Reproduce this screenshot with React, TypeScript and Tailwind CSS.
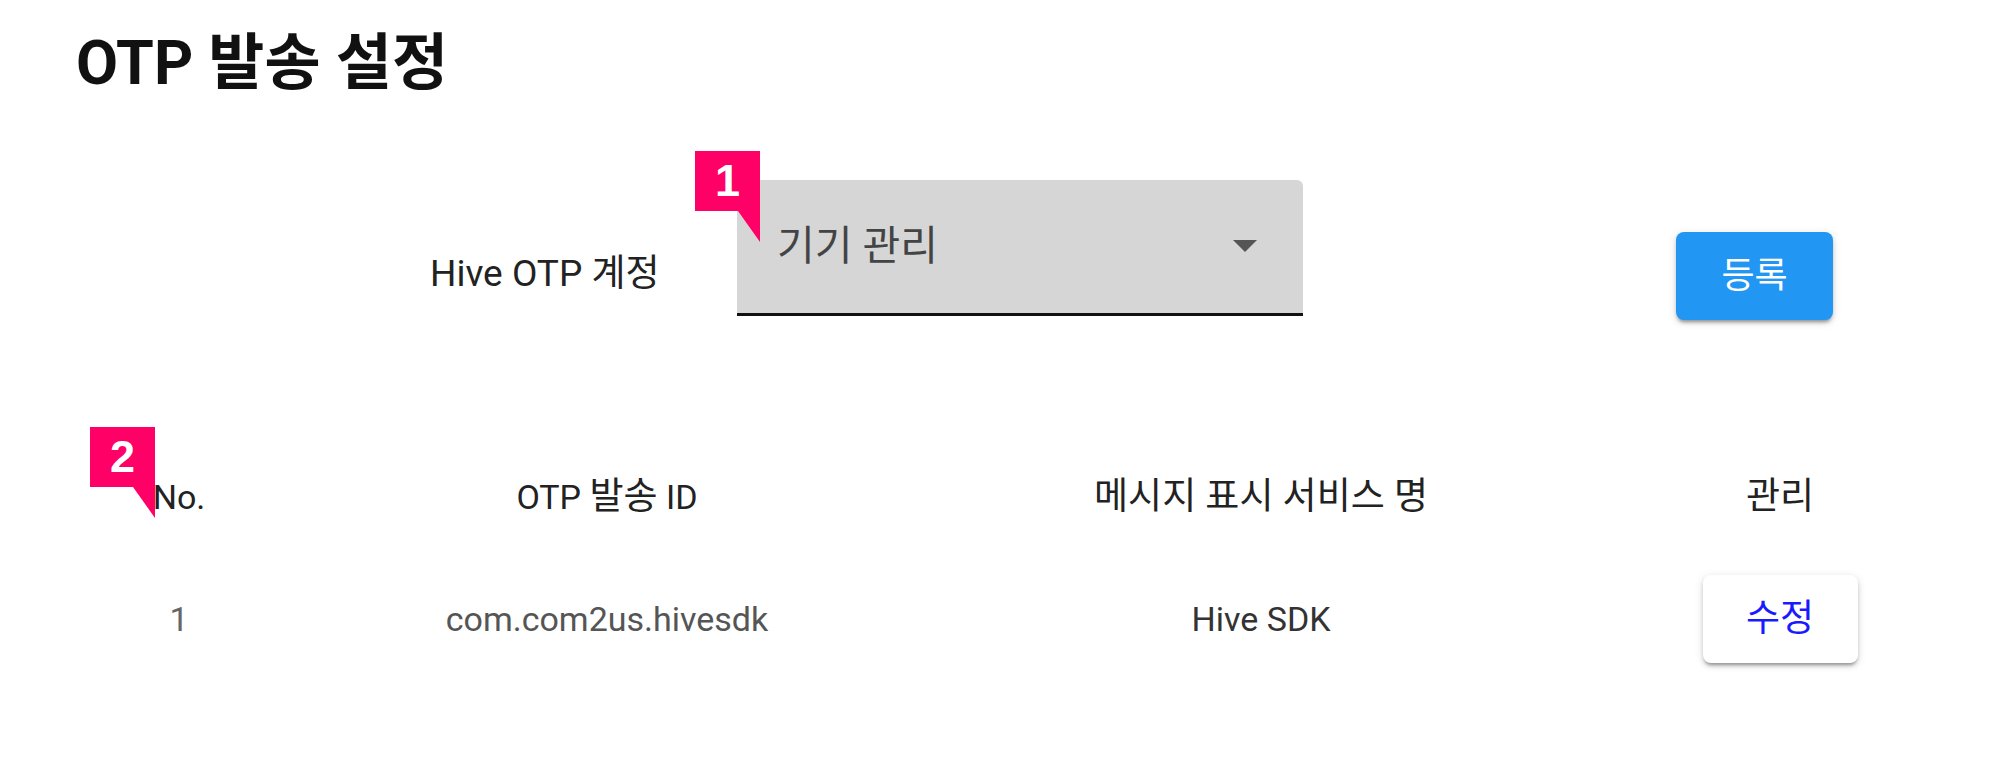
import React from "react";

const font = { fontFamily: '"Roboto", "Noto Sans CJK KR", sans-serif' };

const raised =
  "shadow-[0_4px_3px_-2px_rgba(0,0,0,0.25),0_3px_4px_0_rgba(0,0,0,0.14),0_2px_10px_0_rgba(0,0,0,0.12)]";

function Marker({ n, className }: { n: string; className: string }) {
  return (
    <div className={`absolute ${className}`}>
      <div
        className="w-[65px] h-[60px] bg-[#ff0066] text-white font-bold text-[45px] leading-[60px] text-center"
        style={{ fontFamily: '"Liberation Sans", Arial, sans-serif' }}
      >
        {n}
      </div>
      <svg width="65" height="32" className="block" viewBox="0 0 65 32">
        <polygon points="43,0 65,0 65,31" fill="#ff0066" />
      </svg>
    </div>
  );
}

export default function App() {
  const rows = [{ no: "1", id: "com.com2us.hivesdk", name: "Hive SDK" }];

  return (
    <div className="relative w-[2000px] h-[758px] bg-white overflow-hidden" style={font}>
      <div className="pt-[33px] pl-[76px]">
        <h1 className="text-[61px] leading-none font-bold text-[#111]">OTP 발송 설정</h1>
      </div>

      {/* account row */}
      <div className="flex items-start mt-[86px] pl-[430px]">
        <div className="w-[307px] mt-[72px] text-[37px] leading-[44px] text-[#222] whitespace-nowrap">
          Hive OTP 계정
        </div>
        <div className="w-[566px] h-[136px] bg-[#d6d6d6] rounded-t-[6px] border-b-[3px] border-[#111]">
          <div className="flex items-center justify-between pt-[43px] pl-[40px] pr-[46px]">
            <span className="text-[41px] leading-[46px] text-[#444]">기기 관리</span>
            <svg width="24" height="12" viewBox="0 0 24 12">
              <polygon points="0,0 24,0 12,12" fill="#555" />
            </svg>
          </div>
        </div>
        <button className={`ml-[373px] mt-[52px] w-[157px] h-[88px] rounded-[8px] bg-[#2196f3] text-white text-[36px] ${raised}`}>
          등록
        </button>
      </div>

      {/* table */}
      <div className="mt-[137px] ml-[74px]">
        <div className="grid grid-cols-[210px_646px_662px_376px] h-[80px] items-center text-[34px] text-[#222] text-center">
          <div>No.</div>
          <div>
            OTP <span className="text-[37px]">발송</span> ID
          </div>
          <div className="text-[37px]">메시지 표시 서비스 명</div>
          <div className="text-[37px]">관리</div>
        </div>
        {rows.map((r) => (
          <div
            key={r.no}
            className="grid grid-cols-[210px_646px_662px_376px] h-[88px] mt-[38px] items-center text-[34px] text-[#555] text-center"
          >
            <div className="text-[#666]">{r.no}</div>
            <div>{r.id}</div>
            <div className="text-[#333]">{r.name}</div>
            <div className="flex justify-center">
              <button className={`w-[155px] h-[88px] rounded-[8px] bg-white text-[#1a1aff] text-[37px] ${raised}`}>
                수정
              </button>
            </div>
          </div>
        ))}
      </div>

      <Marker n="1" className="left-[695px] top-[151px]" />
      <Marker n="2" className="left-[90px] top-[427px]" />
    </div>
  );
}
